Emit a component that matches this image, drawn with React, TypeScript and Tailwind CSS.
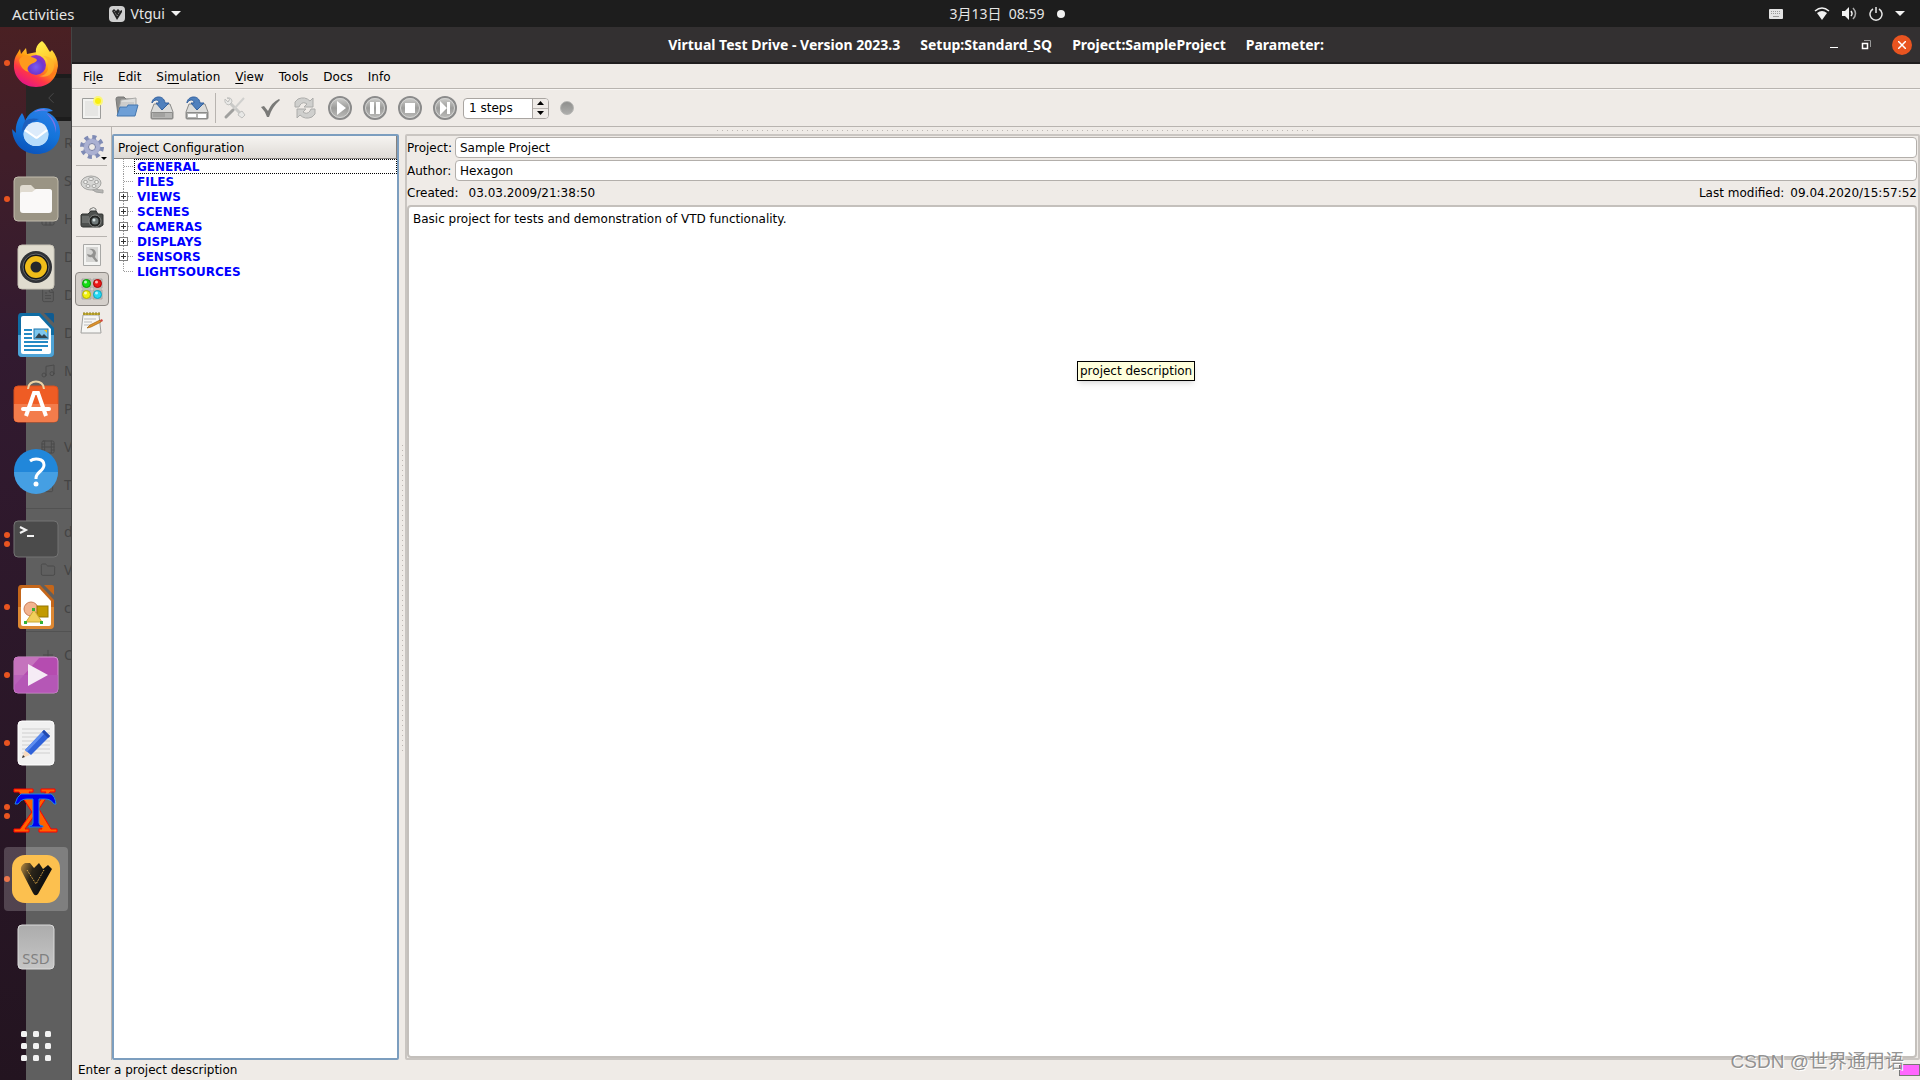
import { useState, type ReactNode } from "react";
import { ChevronLeft, FileText, Film, Folder, House, Music, Plus, Trash2 } from "lucide-react";

const placesTop = [
  { letter: "R" },
  { letter: "S" },
  { letter: "H", icon: House },
  { letter: "D" },
  { letter: "D", icon: FileText },
  { letter: "D" },
  { letter: "M", icon: Music },
  { letter: "P" },
  { letter: "V", icon: Film },
  { letter: "T", icon: Trash2 },
];

const placesMiddle = [{ letter: "d" }, { letter: "V", icon: Folder }, { letter: "c" }];

const treeItems = [
  { name: "GENERAL", open: false },
  { name: "FILES", open: false },
  { name: "VIEWS", open: true },
  { name: "SCENES", open: true },
  { name: "CAMERAS", open: true },
  { name: "DISPLAYS", open: true },
  { name: "SENSORS", open: true },
  { name: "LIGHTSOURCES", open: false },
];

function PlaceRow({ letter, icon: Icon }: { letter: string; icon?: any }) {
  return (
    <div className="flex h-[38px] items-center pl-[14px] text-[#444]">
      <span className="w-6 shrink-0">{Icon && <Icon size={16} strokeWidth={1.5} className="text-[#4b4b4b]" />}</span>
      <span className="text-sm">{letter}</span>
    </div>
  );
}

// the file manager window that shows through the translucent dock
function DockBackdrop() {
  return (
    <div aria-hidden="true" className="absolute inset-0 flex overflow-hidden bg-linear-to-b from-[#4a2023] via-[#321a30] via-30% to-[#231420]">
      <div className="ml-[26px] mt-[47px] flex-1 overflow-hidden bg-[#5f5f5f]">
        <div className="flex h-[47px] items-center border-b-4 border-t-4 border-[#1c1c1c] bg-[#262626] pl-4">
          <ChevronLeft size={18} strokeWidth={1} className="text-[#555]" />
        </div>
        <div className="pt-[3px]">
          {placesTop.map((p, i) => (
            <PlaceRow key={i} {...p} />
          ))}
        </div>
        <div className="mt-1 border-t border-[#525252] pt-1">
          {placesMiddle.map((p, i) => (
            <PlaceRow key={i} {...p} />
          ))}
        </div>
        <div className="mt-1 border-t border-[#525252] pt-1">
          <PlaceRow letter="O" icon={Plus} />
        </div>
      </div>
    </div>
  );
}

function Firefox() {
  return (
    <svg width="46" height="48" viewBox="0 0 46 48">
      <defs>
        <linearGradient id="ffBody" x1="0.8" y1="0.1" x2="0.25" y2="0.95">
          <stop offset="0" stopColor="#fff44f" />
          <stop offset="0.4" stopColor="#ff980e" />
          <stop offset="0.7" stopColor="#ff3647" />
          <stop offset="1" stopColor="#e31587" />
        </linearGradient>
        <linearGradient id="ffTail" x1="0" y1="0" x2="0.3" y2="1">
          <stop offset="0" stopColor="#fff44f" />
          <stop offset="0.6" stopColor="#ffcb2e" />
          <stop offset="1" stopColor="#ff7a1a" />
        </linearGradient>
        <radialGradient id="ffGlobe" cx="0.5" cy="0.6" r="0.6">
          <stop offset="0" stopColor="#7a5cf0" />
          <stop offset="0.6" stopColor="#6d38cf" />
          <stop offset="1" stopColor="#a02fc0" />
        </radialGradient>
      </defs>
      <path d="M4 15 7 10l1 5 5-6 1 6 10-2 17 5c4 8 4 15 0 21-4 6-11 9-18 9C9 48 0 37 1 25c0-4 1-7 3-10z" fill="url(#ffBody)" />
      <path d="M29 2c4 3 5 7 8 11l2-2c4 5 6 10 6 16-1 6-3 10-8 13 1-9-1-15-7-19-5-3-8-6-7-11 1-4 3-6 6-8z" fill="url(#ffTail)" />
      <circle cx="23" cy="26" r="10" fill="url(#ffGlobe)" />
      <path d="M6 21c3-5 8-6 12-3 3 1 5 1 6 3-1 3-5 3-7 5-3 2-3 5-1 7-5-1-9-5-10-12z" fill="#ff9a1c" />
      <path d="M30 17c4 2 6 6 5 11 1 4-3 9-9 9 8 3 15-3 15-10 0-6-4-10-11-10z" fill="#ffb629" opacity=".75" />
    </svg>
  );
}

function Thunderbird() {
  return (
    <svg width="48" height="48" viewBox="0 0 48 48">
      <defs>
        <linearGradient id="tbBody" x1="0.7" y1="0" x2="0.3" y2="1">
          <stop offset="0" stopColor="#2a7fe8" />
          <stop offset="0.5" stopColor="#1373d9" />
          <stop offset="1" stopColor="#0a52ba" />
        </linearGradient>
      </defs>
      <path d="M10 6c2 3 3 6 3 8 3-7 10-13 19-13 4 0 7 1 9 3l-6 1c9 4 13 12 13 20 0 13-10 22-23 22C11 47 1 37 0 22l4 4c-1-8 2-14 6-20z" fill="url(#tbBody)" />
      <path d="M22 5c4-3 10-4 14-1-5-1-10 0-14 1z" fill="#8a7de8" />
      <path d="M34 6c7 4 11 11 10 20-1-8-4-14-10-20z" fill="#7d74e6" />
      <path d="M13 14c4-3 9-3 14-2l-9 4-8 9c0-4 1-8 3-11z" fill="#1d5fbd" />
      <path d="M12 24q4-10 14-9 8 1 10 9c2 9-4 15-12 15s-14-7-12-15z" fill="#dcebfb" />
      <path d="M12 24l11 7c1 1 2 1 3 0l10-7c2 9-4 15-12 15s-14-7-12-15z" fill="#b6dcfb" />
      <path d="M13 23l10 7c1 1 2 1 3 0l9-7" fill="none" stroke="#fff" strokeWidth="2" />
    </svg>
  );
}

function Files() {
  return (
    <svg width="46" height="46" viewBox="0 0 46 46">
      <rect x="1" y="1" width="44" height="44" rx="4" fill="#9a9484" stroke="#c2bcad" />
      <path d="M7 12q0-3 3-3h8l4 4h14q3 0 3 3v5H7z" fill="#e0dbd0" />
      <path d="M7 18q0-2 2-2h10l4-3h13q3 0 3 3v18q0 3-3 3H10q-3 0-3-3z" fill="#faf9f8" />
    </svg>
  );
}

function Rhythmbox() {
  return (
    <svg width="38" height="46" viewBox="0 0 38 46">
      <rect x="1" y="1" width="36" height="44" rx="4" fill="#e0dccf" stroke="#c9c5b8" />
      <circle cx="19" cy="23" r="16" fill="#303236" />
      <circle cx="19" cy="23" r="13" fill="#15171a" stroke="#66696d" />
      <circle cx="19" cy="23" r="11" fill="#f0bd1a" />
      <circle cx="19" cy="23" r="5.500" fill="#24272b" />
    </svg>
  );
}

function Writer() {
  return (
    <svg width="38" height="46" viewBox="0 0 38 46">
      <path d="M4 1h19l14 15v25q0 4-4 4H5q-4 0-4-4V5q0-4 3-4z" fill="#0f6ca3" />
      <path d="M1 23h36v18q0 4-4 4H5q-4 0-4-4z" fill="#4ea3d6" />
      <path d="M4 6q0-2 2-2h16l12 13v23q0 2-2 2H6q-2 0-2-2z" fill="#fff" />
      <path d="M27 1h8q2 0 2 2v8z" fill="#0f5b91" />
      <path d="M7 18h8M7 22h8M7 26h8M7 30h24M7 34h24M7 38h18" stroke="#2489c4" strokeWidth="2" />
      <rect x="17" y="17" width="14" height="10" fill="#7cc6ee" stroke="#1d77ad" />
      <path d="M18 26l4-5 3 3 2-2 4 4z" fill="#31444e" />
      <path d="M27 18h3v3z" fill="#f4c020" />
    </svg>
  );
}

function Software() {
  return (
    <svg width="46" height="48" viewBox="0 0 46 48">
      <rect x="1" y="7" width="44" height="36" rx="4" fill="#ef5c24" stroke="#d9501f" />
      <path d="M1 25h44v14q0 4-4 4H5q-4 0-4-4z" fill="#f37c4b" />
      <path d="M15 10C15 0 31 0 31 10" fill="none" stroke="#ecd3a5" strokeWidth="2" />
      <path d="M13 37 21 14h4l8 23" fill="none" stroke="#fff" strokeWidth="4" />
      <path d="M10 30h26" stroke="#fff" strokeWidth="4" strokeLinecap="round" />
    </svg>
  );
}

function Help() {
  return (
    <svg width="46" height="46" viewBox="0 0 46 46">
      <circle cx="23" cy="23" r="22" fill="#2187da" />
      <path d="M1 24h44a22 22 0 0 1-44 0z" fill="#459fe3" />
      <path d="M17 13c4-3 14-3 14 4 0 6-8 7-8 13v1" fill="none" stroke="#fff" strokeWidth="3" />
      <circle cx="23" cy="36" r="2.500" fill="#fff" />
    </svg>
  );
}

function Terminal() {
  return (
    <svg width="46" height="38" viewBox="0 0 46 38">
      <rect x="1" y="1" width="44" height="36" rx="4" fill="#4b4b4b" stroke="#747474" />
      <path d="M7 7l6 3-6 3M14 16h7" fill="none" stroke="#f4f4f4" strokeWidth="2" />
    </svg>
  );
}

function Draw() {
  return (
    <svg width="38" height="46" viewBox="0 0 38 46">
      <path d="M4 1h19l14 15v25q0 4-4 4H5q-4 0-4-4V5q0-4 3-4z" fill="#c4661a" />
      <path d="M1 23h36v18q0 4-4 4H5q-4 0-4-4z" fill="#dd8833" />
      <path d="M4 6q0-2 2-2h16l12 13v23q0 2-2 2H6q-2 0-2-2z" fill="#fff" />
      <path d="M27 1h8q2 0 2 2v8z" fill="#c4661a" />
      <circle cx="14" cy="25" r="7" fill="#f2b48f" stroke="#cc7c56" />
      <rect x="20" y="22" width="11" height="11" fill="#c29a00" stroke="#957700" />
      <path d="M17 26l8 12H9z" fill="#f2cf5b" stroke="#cba832" />
      <path d="M15 24h3v3h-3zM7 37h3v3H7zM23 37h3v3h-3z" fill="#35b235" />
    </svg>
  );
}

function Videos() {
  return (
    <svg width="46" height="38" viewBox="0 0 46 38">
      <rect x="1" y="1" width="44" height="36" rx="4" fill="#b54cb0" stroke="#d692d2" />
      <path d="M1 5q0-4 4-4h22L1 30z" fill="#c573bd" />
      <path d="M1 19h44v14q0 4-4 4H5q-4 0-4-4z" fill="#b55db9" opacity=".7" />
      <path d="M15 8l20 11-20 11z" fill="#f5ebf5" />
    </svg>
  );
}

function TextEditor() {
  return (
    <svg width="38" height="46" viewBox="0 0 38 46">
      <rect x="1" y="1" width="36" height="44" rx="4" fill="#f1f1f1" stroke="#fff" />
      <path d="M5 9h28M5 13h28M5 17h28M5 21h28M5 25h28M5 29h28M5 33h28" stroke="#cfcfcf" />
      <path d="M5 38l3-8 5 5z" fill="#f6d9bd" />
      <path d="M5 38l1-3 2 2z" fill="#333" />
      <path d="M8 30 27 10l6 6-19 19z" fill="#2f62d9" />
      <path d="M8 30 27 10l2 2-19 20z" fill="#5e8df0" />
      <path d="M25 12l2-2 6 6-2 2z" fill="#2149ad" />
    </svg>
  );
}

function XTerm() {
  return (
    <svg width="46" height="46" viewBox="0 0 46 46">
      <path d="M1 1h19v3h-4l8 13 9-13h-5V1h14v3h-5L26 21l12 20h6v3H26v-3h3L21 28l-9 13h4v3H1v-3h6l12-17L6 4H1z" fill="#ff6200" stroke="#f00" />
      <path d="M8 6h30q4 2 5 10h-2q-3-5-9-5h-6v24q0 3 4 3v1H16v-1q4 0 4-3V11h-6q-6 0-9 5H2q2-8 6-10z" fill="#0000f0" stroke="#1b84e8" />
    </svg>
  );
}

function Vtd() {
  return (
    <svg width="48" height="48" viewBox="0 0 48 48">
      <defs>
        <linearGradient id="vtdMark" x1="0" y1="0" x2="0.8" y2="0.3">
          <stop offset="0" stopColor="#b98d42" />
          <stop offset="0.5" stopColor="#2b2519" />
          <stop offset="1" stopColor="#111" />
        </linearGradient>
      </defs>
      <rect width="48" height="48" rx="13" fill="#fcc04f" />
      <path d="M9 15q-1-4 4-7h5l4 5 5-5 4 6 5-4 4 4-14 25q-3 3-5-1z" fill="url(#vtdMark)" />
      <path d="M15 15l9 14M32 15l-8 14" stroke="#fcc04f" strokeDasharray="1 1" />
    </svg>
  );
}

function Ssd() {
  return (
    <svg width="38" height="46" viewBox="0 0 38 46">
      <defs>
        <linearGradient id="ssd" x1="0" y1="0" x2="0" y2="1">
          <stop offset="0" stopColor="#acacac" />
          <stop offset="1" stopColor="#c6c6c6" />
        </linearGradient>
      </defs>
      <rect x="1" y="1" width="36" height="44" rx="4" fill="url(#ssd)" stroke="#dadada" />
      <text x="19" y="40" textAnchor="middle" fontFamily="Noto Sans, sans-serif" fontSize="15" fill="#808080">
        SSD
      </text>
    </svg>
  );
}

const dockApps = [
  { name: "Firefox", icon: Firefox, windows: 1 },
  { name: "Thunderbird", icon: Thunderbird, windows: 0 },
  { name: "Files", icon: Files, windows: 1 },
  { name: "Rhythmbox", icon: Rhythmbox, windows: 0 },
  { name: "LibreOffice Writer", icon: Writer, windows: 0 },
  { name: "Ubuntu Software", icon: Software, windows: 0 },
  { name: "Help", icon: Help, windows: 0 },
  { name: "Terminal", icon: Terminal, windows: 2 },
  { name: "LibreOffice Draw", icon: Draw, windows: 1 },
  { name: "Videos", icon: Videos, windows: 1 },
  { name: "Text Editor", icon: TextEditor, windows: 1 },
  { name: "XTerm", icon: XTerm, windows: 2 },
  { name: "Vtgui", icon: Vtd, windows: 1, active: true },
  { name: "SSD", icon: Ssd, windows: 0 },
];

function Dock() {
  return (
    <nav aria-label="Dock" className="relative w-[72px] shrink-0 border-r border-[#444]">
      <DockBackdrop />
      <div className="relative flex h-full flex-col justify-between pt-0.5 pb-2.5">
        <ul>
          {dockApps.map(({ name, icon: Icon, windows, active }) => (
            <li key={name} className="flex h-[68px] items-center">
              <span className="flex w-1 flex-col items-end gap-[3px]">
                {Array.from({ length: windows }, (_, i) => (
                  <i key={i} className="-mr-[6px] size-[6px] rounded-full bg-[#e95420]" />
                ))}
              </span>
              <button
                aria-label={name}
                className={`flex size-16 items-center justify-center rounded ${active ? "bg-white/20" : ""}`}
              >
                <Icon />
              </button>
            </li>
          ))}
        </ul>
        <button aria-label="Show Applications" className="mx-auto flex size-12 items-center justify-center">
          <svg width="30" height="30" viewBox="0 0 30 30" fill="#f2f2f2">
            {[0, 12, 24].map((y) => [0, 12, 24].map((x) => <rect key={`${x}-${y}`} x={x} y={y} width="6" height="6" rx="1.500" />))}
          </svg>
        </button>
      </div>
    </nav>
  );
}

function TopBar() {
  return (
    <header className="grid h-[27px] shrink-0 grid-cols-[1fr_auto_1fr] items-center bg-[#1d1d1d] font-['Noto_Sans','Noto_Sans_CJK_SC',sans-serif] text-[15px] leading-5 text-[#e6e6e6]">
      <div className="flex items-center pl-3">
        <button>Activities</button>
        <button className="ml-[34px] flex items-center gap-1.5">
          <svg width="16" height="16" viewBox="0 0 16 16">
            <rect width="16" height="16" rx="4" fill="#cfcfcf" />
            <path d="M3 5l2-2 2 2 2-2 2 2 2-1v2l-5 8z" fill="#222" />
            <path d="M5 5l3 5 3-5" fill="none" stroke="#999" strokeDasharray="1 1" />
          </svg>
          <span className="text-sm">Vtgui</span>
          <svg width="10" height="6" viewBox="0 0 10 6">
            <path d="M0 0h10L5 5z" fill="#f2f2f2" />
          </svg>
        </button>
      </div>
      <button className="flex items-center gap-3 pl-[94px] text-sm">
        <span className="whitespace-pre">3月13日  08:59</span>
        <i className="size-2 rounded-full bg-[#f2f2f2]" />
      </button>
      <div className="flex items-center justify-end gap-3 pr-[15px]">
        <svg width="14" height="10" viewBox="0 0 14 10" className="mr-[19px]">
          <rect width="14" height="10" rx="1" fill="#e3e3e3" />
          <path d="M2 2.500h10M2 4.500h10" stroke="#999" strokeDasharray="1 1" />
          <path d="M4 7.500h6" stroke="#999" />
        </svg>
        <svg width="16" height="13" viewBox="0 0 16 13">
          <path d="M1 4q7-6 14 0" fill="none" stroke="#f2f2f2" strokeWidth="1.500" />
          <path d="M3 6q5-4 10 0l-5 7z" fill="#f2f2f2" />
        </svg>
        <svg width="15" height="14" viewBox="0 0 15 14">
          <path d="M0 4h3l4-4v13L3 9H0z" fill="#f2f2f2" />
          <path d="M9 4q2 2.500 0 5" fill="none" stroke="#f2f2f2" strokeWidth="1.500" />
          <path d="M11 1q5 5.500 0 11" fill="none" stroke="#aaa" strokeWidth="1.500" />
        </svg>
        <svg width="14" height="14" viewBox="0 0 14 14" fill="none" stroke="#e6e6e6" strokeWidth="1.500">
          <path d="M4 2a6 6 0 1 0 6 0M7 0v6" />
        </svg>
        <svg width="10" height="6" viewBox="0 0 10 6">
          <path d="M0 0h10L5 5z" fill="#f2f2f2" />
        </svg>
      </div>
    </header>
  );
}

function TitleBar() {
  return (
    <div className="grid h-[37px] shrink-0 grid-cols-[1fr_auto_1fr] items-center border-b-2 border-[#1f1d1e] bg-[#333031] pt-px font-['Noto_Sans',sans-serif] text-white">
      <h1 className="col-start-2 flex gap-5 text-sm font-bold">
        <span>Virtual Test Drive - Version 2023.3</span>
        <span>Setup:Standard_SQ</span>
        <span>Project:SampleProject</span>
        <span>Parameter:</span>
      </h1>
      <div className="flex items-center justify-end gap-[21px] pr-2">
        <button aria-label="Minimize" className="flex h-3 w-3 items-end justify-center pb-[3px]">
          <span className="h-px w-2 bg-white" />
        </button>
        <button aria-label="Restore">
          <svg width="10" height="10" viewBox="0 0 10 10" fill="none">
            <path d="M3 .5h6.500V7" stroke="#999" />
            <path d="M1.500 3.500h5v5h-5z" stroke="#fff" strokeWidth="1.500" />
          </svg>
        </button>
        <button aria-label="Close" className="flex size-5 items-center justify-center rounded-full bg-[#e95420]">
          <svg width="8" height="8" viewBox="0 0 8 8">
            <path d="M0 0l8 8M8 0 0 8" stroke="#fff" strokeWidth="1.500" />
          </svg>
        </button>
      </div>
    </div>
  );
}

function MenuBar() {
  return (
    <div className="flex h-[25px] shrink-0 items-center gap-[15px] border-b border-[#b8b4b0] pl-[11px] pt-0.5">
      <button>
        Fi<u className="underline-offset-2">l</u>e
      </button>
      <button>Edit</button>
      <button>
        Si<u className="underline-offset-2">m</u>ulation
      </button>
      <button>
        <u className="underline-offset-2">V</u>iew
      </button>
      <button>Tools</button>
      <button>Docs</button>
      <button>Info</button>
    </div>
  );
}

function ToolButton({ label, children }: { label: string; children: ReactNode }) {
  return (
    <button aria-label={label} title={label} className="flex h-[34px] w-[35px] shrink-0 items-center justify-center">
      {children}
    </button>
  );
}

function RoundIcon({ children }: { children: ReactNode }) {
  return (
    <svg width="24" height="24" viewBox="0 0 24 24">
      <circle cx="12" cy="12" r="11" fill="url(#roundFill)" stroke="#8b8b8b" strokeWidth="2" />
      <circle cx="12" cy="12" r="9.500" fill="none" stroke="#d4d4d2" />
      <g fill="#fff">{children}</g>
    </svg>
  );
}

function DiskIcon({ split }: { split?: boolean }) {
  return (
    <svg width="24" height="24" viewBox="0 0 24 24">
      <path d="M4 8h16l3 8v6q0 1-1 1H2q-1 0-1-1v-6z" fill="#dcdcda" stroke="#8c8c8a" />
      <path d="M1.500 16.500h21v6h-21z" fill="#b5b5b3" stroke="#8c8c8a" />
      {split ? <path d="M3 18h8v3H3zM13 18h8v4h-8z" fill="#fff" /> : <path d="M3 18h12M3 20h12" stroke="#8f8f8d" />}
      <path d="M2 7C2 0 14-2 15 7h4l-7 7-6-7h3C9 3 4 3 2 7z" fill="#4f80bd" stroke="#33619f" />
    </svg>
  );
}

function Toolbar() {
  const [steps, setSteps] = useState(1);

  return (
    <div className="flex h-[38px] shrink-0 items-center border-b border-t border-b-[#b8b4b0] border-t-[#f8f6f4] pl-[2px]">
      <svg width="0" height="0" className="absolute">
        <linearGradient id="roundFill" x1="0" y1="0" x2="0" y2="1">
          <stop offset="0" stopColor="#d2d2d0" />
          <stop offset="0.5" stopColor="#9c9c9a" />
          <stop offset="1" stopColor="#bebebc" />
        </linearGradient>
      </svg>
      <ToolButton label="New">
        <svg width="24" height="24" viewBox="0 0 24 24">
          <path d="M2.500 2.500h18v20h-18z" fill="#f2f2f0" stroke="#9d9d9b" />
          <path d="M5 5h13v15H5z" fill="#e6e6e4" />
          <circle cx="18" cy="5" r="5" fill="#fbf67c" />
          <circle cx="18" cy="5" r="3" fill="#f8ee10" />
        </svg>
      </ToolButton>
      <ToolButton label="Open">
        <svg width="24" height="24" viewBox="0 0 24 24">
          <path d="M1 3q0-2 2-2h6l2 2h7v16H3z" fill="#8d8d8b" stroke="#777775" />
          <path d="M6 4l15-2v12H4z" fill="#dededc" stroke="#a9a9a7" />
          <path d="M6 7h13M6 9h13" stroke="#bbb" />
          <path d="M5 11h7l1-2h10l-3 11H2z" fill="#6e9fd6" stroke="#4577ae" />
        </svg>
      </ToolButton>
      <ToolButton label="Save">
        <DiskIcon />
      </ToolButton>
      <ToolButton label="Save As">
        <DiskIcon split />
      </ToolButton>
      <div className="mx-px h-[30px] w-px bg-[#b8b4b0]" />
      <ToolButton label="Configure">
        <svg width="24" height="24" viewBox="0 0 24 24" fill="none">
          <path d="M5 5l13 13" stroke="#c9c9c7" strokeWidth="3" />
          <path d="M2 3l3 3 2-3-3-1q5-1 5 4L6 9Q1 8 2 3zM16 17l3-2 3 4-3 3-4-3z" fill="#e8e8e6" stroke="#c0c0be" />
          <path d="M21 2 10 14" stroke="#d0d0ce" strokeWidth="2" />
          <path d="M10 14l-7 7" stroke="#a0a09e" strokeWidth="3" strokeLinecap="round" />
        </svg>
      </ToolButton>
      <ToolButton label="Apply">
        <svg width="22" height="22" viewBox="0 0 22 22">
          <path d="M2 10l3-1 4 5Q13 5 20 2l1 1Q13 10 10 20H8Q6 14 2 10z" fill="#7a7a78" />
        </svg>
      </ToolButton>
      <ToolButton label="Reload">
        <svg width="22" height="22" viewBox="0 0 22 22" fill="#cfcfcd" stroke="#acacaa">
          <path d="M1 10V5l3-3q7-3 12 2l3-3v9h-9l3-3Q9 4 6 8l-1 2z" />
          <path d="M21 12v5l-3 3q-7 3-12-2l-3 3v-9h9l-3 3q4 3 7-1l1-2z" />
        </svg>
      </ToolButton>
      <ToolButton label="Play">
        <RoundIcon>
          <path d="M9 5l9 7-9 7z" />
        </RoundIcon>
      </ToolButton>
      <ToolButton label="Pause">
        <RoundIcon>
          <path d="M7 6h4v12H7zM13 6h4v12h-4z" />
        </RoundIcon>
      </ToolButton>
      <ToolButton label="Stop">
        <RoundIcon>
          <path d="M7 7h10v10H7z" />
        </RoundIcon>
      </ToolButton>
      <ToolButton label="Step">
        <RoundIcon>
          <path d="M7 5l7 7-7 7zM14 6h3v12h-3z" />
        </RoundIcon>
      </ToolButton>
      <div className="ml-px flex h-[21px] w-[86px] shrink-0 overflow-hidden rounded-sm border border-[#a9a5a1] bg-white">
        <input
          aria-label="Steps"
          value={`${steps} steps`}
          onChange={(e) => setSteps(parseInt(e.target.value) || 1)}
          className="w-[68px] min-w-0 pl-[5px] outline-none"
        />
        <div className="flex w-4 flex-col border-l border-[#a9a5a1] bg-[#efebe7]">
          <button aria-label="More steps" onClick={() => setSteps(steps + 1)} className="flex flex-1 items-center justify-center border-b border-[#b8b4b0]">
            <svg width="7" height="4" viewBox="0 0 7 4">
              <path d="M0 4h7L3.500 0z" />
            </svg>
          </button>
          <button aria-label="Fewer steps" onClick={() => setSteps(Math.max(1, steps - 1))} className="flex flex-1 items-center justify-center">
            <svg width="7" height="4" viewBox="0 0 7 4">
              <path d="M0 0h7L3.500 4z" />
            </svg>
          </button>
        </div>
      </div>
      <span className="ml-[11px] size-[14px] rounded-full border border-[#b4b4b2] bg-linear-to-b from-[#8f8f8d] to-[#adadab]" />
    </div>
  );
}

function SideButton({ label, pressed, children }: { label: string; pressed?: boolean; children: ReactNode }) {
  return (
    <button
      aria-label={label}
      title={label}
      className={`relative flex h-[34px] w-[34px] items-center justify-center rounded ${pressed ? "border border-[#8c8884] bg-[#d5d0cb]" : ""}`}
    >
      {children}
    </button>
  );
}

function SideBar() {
  return (
    <div className="flex w-10 shrink-0 flex-col items-center border-r border-[#b8b4b0] pt-[3px]">
      <SideButton label="Settings">
        <svg width="24" height="24" viewBox="0 0 24 24">
          <circle cx="12" cy="12" r="10" fill="none" stroke="#7f8bb5" strokeWidth="4" strokeDasharray="4 3.850" />
          <circle cx="12" cy="12" r="6" fill="none" stroke="#aab0d2" strokeWidth="5" />
          <circle cx="12" cy="12" r="8.500" fill="none" stroke="#8790b8" strokeDasharray="4 2.700" />
          <circle cx="12" cy="12" r="3.500" fill="#efebe7" stroke="#747da5" />
        </svg>
        <svg width="6" height="3" viewBox="0 0 6 3" className="absolute bottom-1 right-0.5">
          <path d="M0 0h6L3 3z" />
        </svg>
      </SideButton>
      <div className="my-px h-px w-[31px] bg-[#b8b4b0]" />
      <SideButton label="Record">
        <svg width="24" height="20" viewBox="0 0 24 20" stroke="#a3a3a1">
          <path d="M13 13q5 4 10 3v3q-8 0-12-4z" fill="#b5b5b3" />
          <ellipse cx="11" cy="9" rx="10" ry="7" fill="#d5d5d3" />
          <g fill="#f5f5f3">
            <ellipse cx="11" cy="5" rx="2.500" ry="1.500" />
            <ellipse cx="5.500" cy="8" rx="2" ry="1.500" />
            <ellipse cx="16.500" cy="8" rx="2" ry="1.500" />
            <ellipse cx="8" cy="12" rx="2" ry="1.500" />
            <ellipse cx="14" cy="12" rx="2" ry="1.500" />
          </g>
        </svg>
      </SideButton>
      <SideButton label="Screenshot">
        <svg width="24" height="22" viewBox="0 0 24 22">
          <path d="M10 5V2q4-3 6 0v3z" fill="#e4e4e2" stroke="#7d7d7b" />
          <path d="M2 7h6l3-3h5l2 3h4q1 0 1 1v10l-3 2H3q-2 0-2-2V8z" fill="#4d504e" stroke="#313331" />
          <path d="M2 9h7v7H2z" fill="#6b6e6c" />
          <circle cx="15" cy="14" r="6" fill="#222422" stroke="#858785" />
          <circle cx="15" cy="14" r="3.500" fill="#6f7878" />
          <circle cx="14" cy="13" r="1.500" fill="#d3dddd" />
        </svg>
      </SideButton>
      <div className="my-px h-px w-[31px] bg-[#b8b4b0]" />
      <SideButton label="Properties">
        <svg width="20" height="24" viewBox="0 0 20 24">
          <path d="M1.500 1.500h17v21h-17z" fill="#f4f4f2" stroke="#a8a8a6" />
          <path d="M4 4h12v15H4z" fill="#d6d6d4" />
          <path d="M7 6q6-1 7 4l-1 4 3 4-2 1-4-5q-4 1-5-3l4 1 2-2q0-3-4-4z" fill="#929290" />
        </svg>
      </SideButton>
      <SideButton label="Status" pressed>
        <svg width="22" height="22" viewBox="0 0 22 22" strokeWidth="1">
          <path d="M1 1h9v9H1zM12 1h9v9h-9zM1 12h9v9H1zM12 12h9v9h-9z" fill="#bdb9b5" stroke="#aaa6a2" />
          <circle cx="5.500" cy="5.500" r="4" fill="#14dd14" stroke="#079c07" />
          <circle cx="16.500" cy="5.500" r="4" fill="#ed1818" stroke="#ac0707" />
          <circle cx="5.500" cy="16.500" r="4" fill="#f0f00c" stroke="#b3b300" />
          <circle cx="16.500" cy="16.500" r="4" fill="#24d8f2" stroke="#10a4bc" />
          <g fill="#fff" opacity=".7">
            <circle cx="4.500" cy="4" r="1.500" />
            <circle cx="15.500" cy="4" r="1.500" />
            <circle cx="4.500" cy="15" r="1.500" />
            <circle cx="15.500" cy="15" r="1.500" />
          </g>
        </svg>
      </SideButton>
      <SideButton label="Notes">
        <svg width="24" height="22" viewBox="0 0 24 22">
          <path d="M3 3h16l2 18H1z" fill="#f6f6f4" stroke="#a0a09e" />
          <path d="M3 1h17v2H3z" fill="#c9b237" />
          <path d="M4 0v3M7 0v3M10 0v3M13 0v3M16 0v3M19 0v3" stroke="#8f7d1e" />
          <path d="M4 7h12M4 10h8M4 13h6" stroke="#bbb" />
          <path d="M7 16l3-3 10-5 1 2-10 5z" fill="#e0962f" stroke="#a46410" strokeWidth=".7" />
          <path d="M20 8l2-1 1 2-2 1z" fill="#d3443c" />
        </svg>
      </SideButton>
    </div>
  );
}

function Tree() {
  return (
    <section className="flex w-[287px] shrink-0 flex-col rounded-xs border-2 border-[#7c9ebf] bg-white">
      <h2 className="h-[23px] shrink-0 border-b border-r border-[#86827e] bg-linear-to-b from-[#f6f4f1] to-[#dfdbd6] pl-1 leading-6">
        Project Configuration
      </h2>
      <ul className="font-bold text-[#0000ff]">
        {treeItems.map(({ name, open }, i) => {
          const last = i === treeItems.length - 1;
          return (
            <li key={name} className="flex h-[15px] items-center">
              <svg width="20" height="15" viewBox="0 0 20 15" fill="none" stroke="#9b9b9b" className="shrink-0">
                <path d={last ? "M9.500 0v8" : "M9.500 0v15"} strokeDasharray="1 1" />
                <path d="M10 7.500h9" strokeDasharray="1 1" />
                {open && <rect x="5.500" y="3.500" width="8" height="8" fill="#fff" stroke="#808080" />}
                {open && <path d="M7 7.500h5M9.500 5v5" stroke="#333" />}
              </svg>
              <button
                className={`flex h-[15px] flex-1 items-center pl-[2px] ${i === 0 ? "border border-dotted border-black" : "border border-transparent"}`}
              >
                {name}
              </button>
            </li>
          );
        })}
      </ul>
    </section>
  );
}

function ProjectForm() {
  return (
    <form className="relative flex min-w-0 flex-1 flex-col rounded-xs border-2 border-[#c9c5c1] pr-px pt-px">
      <div className="grid grid-cols-[46px_1fr] items-center gap-x-[2px] gap-y-[2px]">
        <label htmlFor="project">Project:</label>
        <input id="project" defaultValue="Sample Project" className="h-[21px] min-w-0 rounded-sm border border-[#b3afab] bg-white px-1 outline-none" />
        <label htmlFor="author">Author:</label>
        <input id="author" defaultValue="Hexagon" className="h-[21px] min-w-0 rounded-sm border border-[#b3afab] bg-white px-1 outline-none" />
      </div>
      <div className="flex h-6 shrink-0 items-center">
        <span>Created:</span>
        <span className="ml-2.5">03.03.2009/21:38:50</span>
        <span className="ml-auto">Last modified:</span>
        <span className="ml-1.5">09.04.2020/15:57:52</span>
      </div>
      <textarea
        aria-label="Project description"
        defaultValue="Basic project for tests and demonstration of VTD functionality."
        className="flex-1 resize-none rounded-sm border-2 border-[#c4c0bc] bg-white px-1 pt-1 outline-none"
      />
      <div role="tooltip" className="absolute left-[670px] top-[225px] border border-black bg-[#ffffdc] px-[2px] leading-[18px] shadow-md">
        project description
      </div>
    </form>
  );
}

export default function App() {
  return (
    <div className="relative flex h-screen flex-col overflow-hidden bg-[#1d1d1d]">
      <TopBar />
      <div className="flex min-h-0 flex-1">
        <Dock />
        <div className="flex min-w-0 flex-1 flex-col bg-[#efebe7] font-['DejaVu_Sans',sans-serif] text-xs text-black">
          <TitleBar />
          <MenuBar />
          <Toolbar />
          <main className="flex min-h-0 flex-1">
            <SideBar />
            <div className="flex min-w-0 flex-1 flex-col">
              <div className="flex h-[7px] shrink-0 items-center justify-center">
                <div className="h-[3px] w-1/3 bg-[radial-gradient(circle,#bdb8b3_1px,transparent_1px)] bg-size-[5px_3px]" />
              </div>
              <div className="flex min-h-0 flex-1">
                <Tree />
                <div className="flex w-1.5 shrink-0 items-center justify-center">
                  <div className="h-1/3 w-[3px] bg-[radial-gradient(circle,#bdb8b3_1px,transparent_1px)] bg-size-[3px_5px]" />
                </div>
                <ProjectForm />
              </div>
            </div>
          </main>
          <footer className="flex h-5 shrink-0 items-center justify-between pl-1.5">
            <span>Enter a project description</span>
            <span className="h-3 w-[21px] border border-[#777] bg-[#ff66ff]" />
          </footer>
        </div>
      </div>
      <div className="pointer-events-none absolute bottom-1 right-4 font-['Liberation_Sans','Noto_Sans_CJK_SC',sans-serif] text-[19px] leading-7 text-[#777]/80 [text-shadow:1px_1px_0_#fff]">
        CSDN @世界通用语
      </div>
    </div>
  );
}
